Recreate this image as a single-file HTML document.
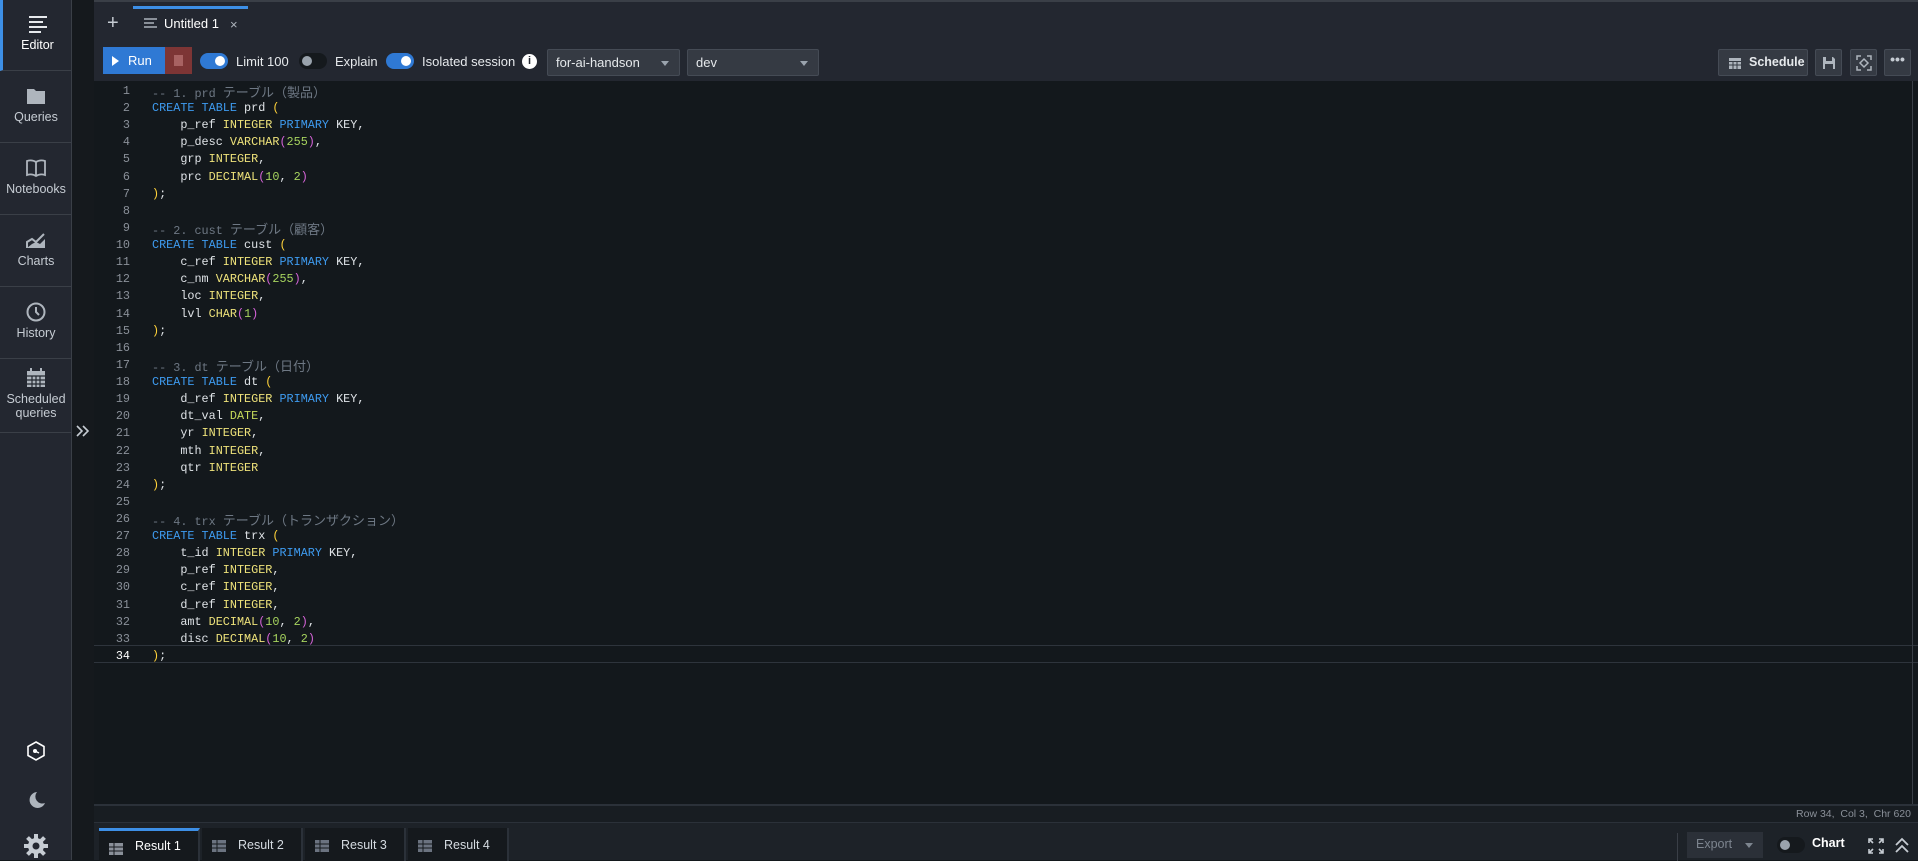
<!DOCTYPE html>
<html><head><meta charset="utf-8"><style>
*{box-sizing:border-box;margin:0;padding:0}
body{width:1918px;height:860px;background:#13181c;position:relative;overflow:hidden;font-family:"Liberation Sans","Noto Sans CJK JP",sans-serif;color:#d5dbe1}
.abs{position:absolute}
#side{left:0;top:0;width:72px;height:860px;background:#232730;border-right:1px solid #3a3f47}
.si{position:absolute;left:0;width:72px;height:71px;border-bottom:1px solid #3a3f47;text-align:center;font-size:12.5px;color:#c6ccd3}
.si svg{display:block;margin:14px auto 4px}
#strip{left:72px;top:0;width:22px;height:860px;background:#15191d}
#top{left:94px;top:0;width:1824px;height:81px;background:#232730;border-top:2px solid #3a3f47}
.tog{position:absolute;width:28px;height:16px;border-radius:8px;background:#2f79d4}
.tog:after{content:"";position:absolute;right:3px;top:3px;width:10px;height:10px;border-radius:50%;background:#fff}
.tog.off{background:#15191d}
.tog.off:after{left:3px;right:auto;background:#9aa3ad}
.lbl{position:absolute;font-size:13px;color:#e6e9ec}
.sel{position:absolute;height:27px;background:#353a43;border:1px solid #454b55;border-radius:2px;font-size:13px;color:#e6e9ec;padding:5px 8px}
.sel:after{content:"";position:absolute;right:10px;top:11px;border:4px solid transparent;border-top:5px solid #9aa3ad}
.btn{position:absolute;height:27px;top:47px;background:#353a43;border:1px solid #454b55;border-radius:2px}
#code{left:94px;top:81px;width:1824px;height:723px;font-family:"Liberation Mono","Noto Sans CJK JP",monospace;font-size:11.8px}
.ln{position:absolute;left:0;width:36px;text-align:right;color:#8a9099;line-height:17px;height:17px}
.cl{position:absolute;left:58px;white-space:pre;color:#dfe3e7;line-height:17px;height:17px}
.c{color:#6e7884}.k{color:#3e9bf0}.t{color:#eee27a}.n{color:#a6d35e}.p1{color:#ffd23a}.p2{color:#d563d8}.dt{color:#c5d95a}
.j{font-family:"Noto Sans CJK JP",sans-serif;font-size:13px;line-height:17px}
#status{left:94px;top:804px;width:1824px;height:18px;background:#181d22;border-top:2px solid #2b3139;font-size:10.5px;color:#8a9099;text-align:right;padding:2px 7px 0 0}
#bot{left:94px;top:822px;width:1824px;height:38px;background:#1d2228;border-top:1px solid #2b3139}
.rt{position:absolute;top:5px;height:33px;width:101px;background:#15191d;border-right:2px solid #2b3139;font-size:12.5px;color:#d5dbe1;padding:10px 0 0 36px}
.rt svg{position:absolute;left:10px;top:12px}
</style></head><body>
<div id="side" class="abs">
 <div class="si" style="top:0;border-left:3px solid #3d8fe6;color:#fff"><svg width="22" height="20"><g stroke="#e6e9ec" stroke-width="2"><line x1="2" y1="3" x2="20" y2="3"/><line x1="2" y1="8" x2="16" y2="8"/><line x1="2" y1="13" x2="20" y2="13"/><line x1="2" y1="18" x2="14" y2="18"/></g></svg>Editor</div>
 <div class="si" style="top:72px"><svg width="22" height="20"><path d="M2 3h7l2 2h9v13H2z" fill="#aeb5bd"/></svg>Queries</div>
 <div class="si" style="top:144px"><svg width="22" height="20"><path d="M11 4C8 2 5 2 2 3v14c3-1 6-1 9 1 3-2 6-2 9-1V3c-3-1-6-1-9 1zM11 4v14" fill="none" stroke="#aeb5bd" stroke-width="1.8"/></svg>Notebooks</div>
 <div class="si" style="top:216px"><svg width="22" height="20"><path d="M2 18V12l5-3 4 3 8-8" fill="none" stroke="#aeb5bd" stroke-width="2"/><path d="M2 18h18V9l-5 5-4-2-4 2" fill="#aeb5bd"/></svg>Charts</div>
 <div class="si" style="top:288px"><svg width="22" height="20"><circle cx="11" cy="10" r="8.5" fill="none" stroke="#aeb5bd" stroke-width="2"/><path d="M11 5v5l3 3" fill="none" stroke="#aeb5bd" stroke-width="2"/></svg>History</div>
 <div class="si" style="top:360px;height:73px"><svg width="22" height="20" style="margin-top:8px"><rect x="2" y="3" width="18" height="16" fill="#aeb5bd"/><g stroke="#232730" stroke-width="1.2"><line x1="2" y1="8" x2="20" y2="8"/><line x1="2" y1="12" x2="20" y2="12"/><line x1="2" y1="16" x2="20" y2="16"/><line x1="7" y1="8" x2="7" y2="19"/><line x1="11" y1="8" x2="11" y2="19"/><line x1="15" y1="8" x2="15" y2="19"/></g><rect x="5" y="0" width="2" height="5" fill="#aeb5bd"/><rect x="15" y="0" width="2" height="5" fill="#aeb5bd"/></svg>Scheduled<br>queries</div>
 <svg class="abs" style="left:26px;top:741px" width="20" height="20"><path d="M10 1l8 4.5v9L10 19l-8-4.5v-9z" fill="none" stroke="#fff" stroke-width="1.6"/><circle cx="9" cy="10" r="2" fill="#fff"/><line x1="9" y1="10" x2="13" y2="12" stroke="#fff" stroke-width="1.5"/></svg>
 <svg class="abs" style="left:26px;top:790px" width="20" height="20"><path d="M11 2a8 8 0 1 0 8 11A7 7 0 0 1 11 2z" fill="#aeb5bd"/></svg>
 <svg class="abs" style="left:24px;top:834px" width="24" height="24"><g fill="#c6ccd3"><circle cx="12" cy="12" r="8"/><rect x="10" y="0" width="4" height="24"/><rect x="0" y="10" width="24" height="4"/><rect x="10" y="0" width="4" height="24" transform="rotate(45 12 12)"/><rect x="10" y="0" width="4" height="24" transform="rotate(-45 12 12)"/></g><circle cx="12" cy="12" r="3.5" fill="#232730"/></svg>
</div>
<div id="strip" class="abs"><svg class="abs" style="left:3px;top:424px" width="16" height="14"><path d="M2 2l5 5-5 5M8 2l5 5-5 5" fill="none" stroke="#c6ccd3" stroke-width="1.6"/></svg></div>
<div id="top" class="abs">
 <div class="abs" style="left:13px;top:10px;font-size:20px;color:#c6ccd3">+</div>
 <div class="abs" style="left:39px;top:4px;width:115px;height:3px;background:#3d8fe6"></div>
 <svg class="abs" style="left:50px;top:16px" width="13" height="12"><g stroke="#8a9099" stroke-width="2"><line x1="0" y1="1" x2="13" y2="1"/><line x1="0" y1="5" x2="10" y2="5"/><line x1="0" y1="9" x2="13" y2="9"/></g></svg>
 <div class="lbl" style="left:70px;top:14px;color:#fff">Untitled 1</div>
 <div class="lbl" style="left:136px;top:15px;color:#aeb5bd">×</div>
 <div class="abs" style="left:9px;top:45px;width:62px;height:27px;background:#2f79d4;color:#fff;font-size:13px;padding:6px 0 0 25px">Run</div>
 <div class="abs" style="left:18px;top:54px;border:5px solid transparent;border-left:7px solid #fff;border-right:0"></div>
 <div class="abs" style="left:71px;top:45px;width:27px;height:27px;background:#7d3535"><div style="margin:8px 9px;width:9px;height:11px;background:#a86262"></div></div>
 <div class="tog" style="left:106px;top:51px"></div><div class="lbl" style="left:142px;top:52px">Limit 100</div>
 <div class="tog off" style="left:205px;top:51px"></div><div class="lbl" style="left:241px;top:52px">Explain</div>
 <div class="tog" style="left:292px;top:51px"></div><div class="lbl" style="left:328px;top:52px">Isolated session</div>
 <div class="abs" style="left:428px;top:52px;width:15px;height:15px;border-radius:50%;background:#fff;color:#232730;font-size:11px;font-weight:bold;text-align:center;line-height:15px">i</div>
 <div class="sel" style="left:453px;top:47px;width:133px">for-ai-handson</div>
 <div class="sel" style="left:593px;top:47px;width:132px">dev</div>
 <div class="btn" style="left:1624px;width:90px"><svg class="abs" style="left:9px;top:6px" width="14" height="14"><rect x="1" y="2" width="12" height="11" fill="#aeb5bd"/><g stroke="#353a43"><line x1="1" y1="5.5" x2="13" y2="5.5"/><line x1="1" y1="9" x2="13" y2="9"/><line x1="5" y1="5" x2="5" y2="13"/><line x1="9" y1="5" x2="9" y2="13"/></g></svg><span class="lbl" style="left:30px;top:5px;font-weight:bold;font-size:12.5px">Schedule</span></div>
 <div class="btn" style="left:1721px;width:27px"><svg class="abs" style="left:6px;top:6px" width="14" height="14"><path d="M1 1h10l2 2v10H1z" fill="#aeb5bd"/><rect x="4" y="1" width="6" height="4" fill="#353a43"/><rect x="3" y="8" width="8" height="5" fill="#353a43"/></svg></div>
 <div class="btn" style="left:1756px;width:27px"><svg class="abs" style="left:5px;top:5px" width="16" height="16"><path d="M1 5V1h4M11 1h4v4M15 11v4h-4M5 15H1v-4" fill="none" stroke="#aeb5bd" stroke-width="1.5"/><path d="M8 4l4 4-4 4-4-4z" fill="none" stroke="#aeb5bd" stroke-width="1.5"/></svg></div>
 <div class="btn" style="left:1790px;width:27px;color:#c6ccd3;font-size:14px;text-align:center;line-height:18px;font-weight:bold">•••</div>
</div>
<div id="code" class="abs">
<div class="abs" style="left:0;top:564px;width:1824px;height:18px;border-top:1px solid #2e343c;border-bottom:1px solid #2e343c"></div>
<div class="abs" style="left:1818px;top:0;width:1px;height:723px;background:#3a3f47"></div>
<div id="lines"></div>
</div>
<div id="status" class="abs">Row 34,&nbsp; Col 3,&nbsp; Chr 620</div>
<div id="bot" class="abs">
 <div class="rt" style="left:5px;border-top:3px solid #3d8fe6;padding-top:8px;color:#fff"><svg width="14" height="12"><rect width="14" height="12" fill="#8a9099"/><g stroke="#15191d"><line x1="0" y1="4" x2="14" y2="4"/><line x1="0" y1="8" x2="14" y2="8"/><line x1="5" y1="0" x2="5" y2="12"/></g></svg>Result 1</div>
 <div class="rt" style="left:108px"><svg width="14" height="12"><rect width="14" height="12" fill="#6b7380"/><g stroke="#15191d"><line x1="0" y1="4" x2="14" y2="4"/><line x1="0" y1="8" x2="14" y2="8"/><line x1="5" y1="0" x2="5" y2="12"/></g></svg>Result 2</div>
 <div class="rt" style="left:211px"><svg width="14" height="12"><rect width="14" height="12" fill="#6b7380"/><g stroke="#15191d"><line x1="0" y1="4" x2="14" y2="4"/><line x1="0" y1="8" x2="14" y2="8"/><line x1="5" y1="0" x2="5" y2="12"/></g></svg>Result 3</div>
 <div class="rt" style="left:314px"><svg width="14" height="12"><rect width="14" height="12" fill="#6b7380"/><g stroke="#15191d"><line x1="0" y1="4" x2="14" y2="4"/><line x1="0" y1="8" x2="14" y2="8"/><line x1="5" y1="0" x2="5" y2="12"/></g></svg>Result 4</div>
 <div class="abs" style="left:1583px;top:10px;width:1px;height:28px;background:#3a3f47"></div>
 <div class="abs" style="left:1593px;top:9px;width:76px;height:26px;background:#2b3038;color:#7d858f;font-size:12.5px;padding:5px 0 0 9px">Export</div>
 <div class="abs" style="left:1651px;top:20px;border:4px solid transparent;border-top:5px solid #7d858f"></div>
 <div class="tog off" style="left:1683px;top:14px"></div>
 <div class="lbl" style="left:1718px;top:13px;font-weight:bold;color:#fff;font-size:12.5px">Chart</div>
 <svg class="abs" style="left:1774px;top:15px" width="16" height="16"><path d="M1 5V1h4M1 1l4 4M11 1h4v4M15 1l-4 4M15 11v4h-4M15 15l-4-4M5 15H1v-4M1 15l4-4" fill="none" stroke="#c6ccd3" stroke-width="1.6"/></svg>
 <svg class="abs" style="left:1800px;top:13px" width="16" height="18"><path d="M2 9l6-6 6 6M2 16l6-6 6 6" fill="none" stroke="#c6ccd3" stroke-width="1.8"/></svg>
</div>
<script>
var L=[
'<span class="c">-- 1. prd <span class="j">テーブル（製品）</span></span>',
'<span class="k">CREATE TABLE</span> prd <span class="p1">(</span>',
'    p_ref <span class="t">INTEGER</span> <span class="k">PRIMARY</span> KEY,',
'    p_desc <span class="t">VARCHAR</span><span class="p2">(</span><span class="n">255</span><span class="p2">)</span>,',
'    grp <span class="t">INTEGER</span>,',
'    prc <span class="t">DECIMAL</span><span class="p2">(</span><span class="n">10</span>, <span class="n">2</span><span class="p2">)</span>',
'<span class="p1">)</span>;',
'',
'<span class="c">-- 2. cust <span class="j">テーブル（顧客）</span></span>',
'<span class="k">CREATE TABLE</span> cust <span class="p1">(</span>',
'    c_ref <span class="t">INTEGER</span> <span class="k">PRIMARY</span> KEY,',
'    c_nm <span class="t">VARCHAR</span><span class="p2">(</span><span class="n">255</span><span class="p2">)</span>,',
'    loc <span class="t">INTEGER</span>,',
'    lvl <span class="t">CHAR</span><span class="p2">(</span><span class="n">1</span><span class="p2">)</span>',
'<span class="p1">)</span>;',
'',
'<span class="c">-- 3. dt <span class="j">テーブル（日付）</span></span>',
'<span class="k">CREATE TABLE</span> dt <span class="p1">(</span>',
'    d_ref <span class="t">INTEGER</span> <span class="k">PRIMARY</span> KEY,',
'    dt_val <span class="dt">DATE</span>,',
'    yr <span class="t">INTEGER</span>,',
'    mth <span class="t">INTEGER</span>,',
'    qtr <span class="t">INTEGER</span>',
'<span class="p1">)</span>;',
'',
'<span class="c">-- 4. trx <span class="j">テーブル（トランザクション）</span></span>',
'<span class="k">CREATE TABLE</span> trx <span class="p1">(</span>',
'    t_id <span class="t">INTEGER</span> <span class="k">PRIMARY</span> KEY,',
'    p_ref <span class="t">INTEGER</span>,',
'    c_ref <span class="t">INTEGER</span>,',
'    d_ref <span class="t">INTEGER</span>,',
'    amt <span class="t">DECIMAL</span><span class="p2">(</span><span class="n">10</span>, <span class="n">2</span><span class="p2">)</span>,',
'    disc <span class="t">DECIMAL</span><span class="p2">(</span><span class="n">10</span>, <span class="n">2</span><span class="p2">)</span>',
'<span class="p1">)</span>;'];
var h='';
for(var i=0;i<L.length;i++){var y=2+i*17.12;
h+='<div class="ln" style="top:'+y+'px'+(i==33?';color:#fff':'')+'">'+(i+1)+'</div><div class="cl" style="top:'+y+'px">'+L[i]+'</div>';}
document.getElementById('lines').innerHTML=h;
</script>
</body></html>
